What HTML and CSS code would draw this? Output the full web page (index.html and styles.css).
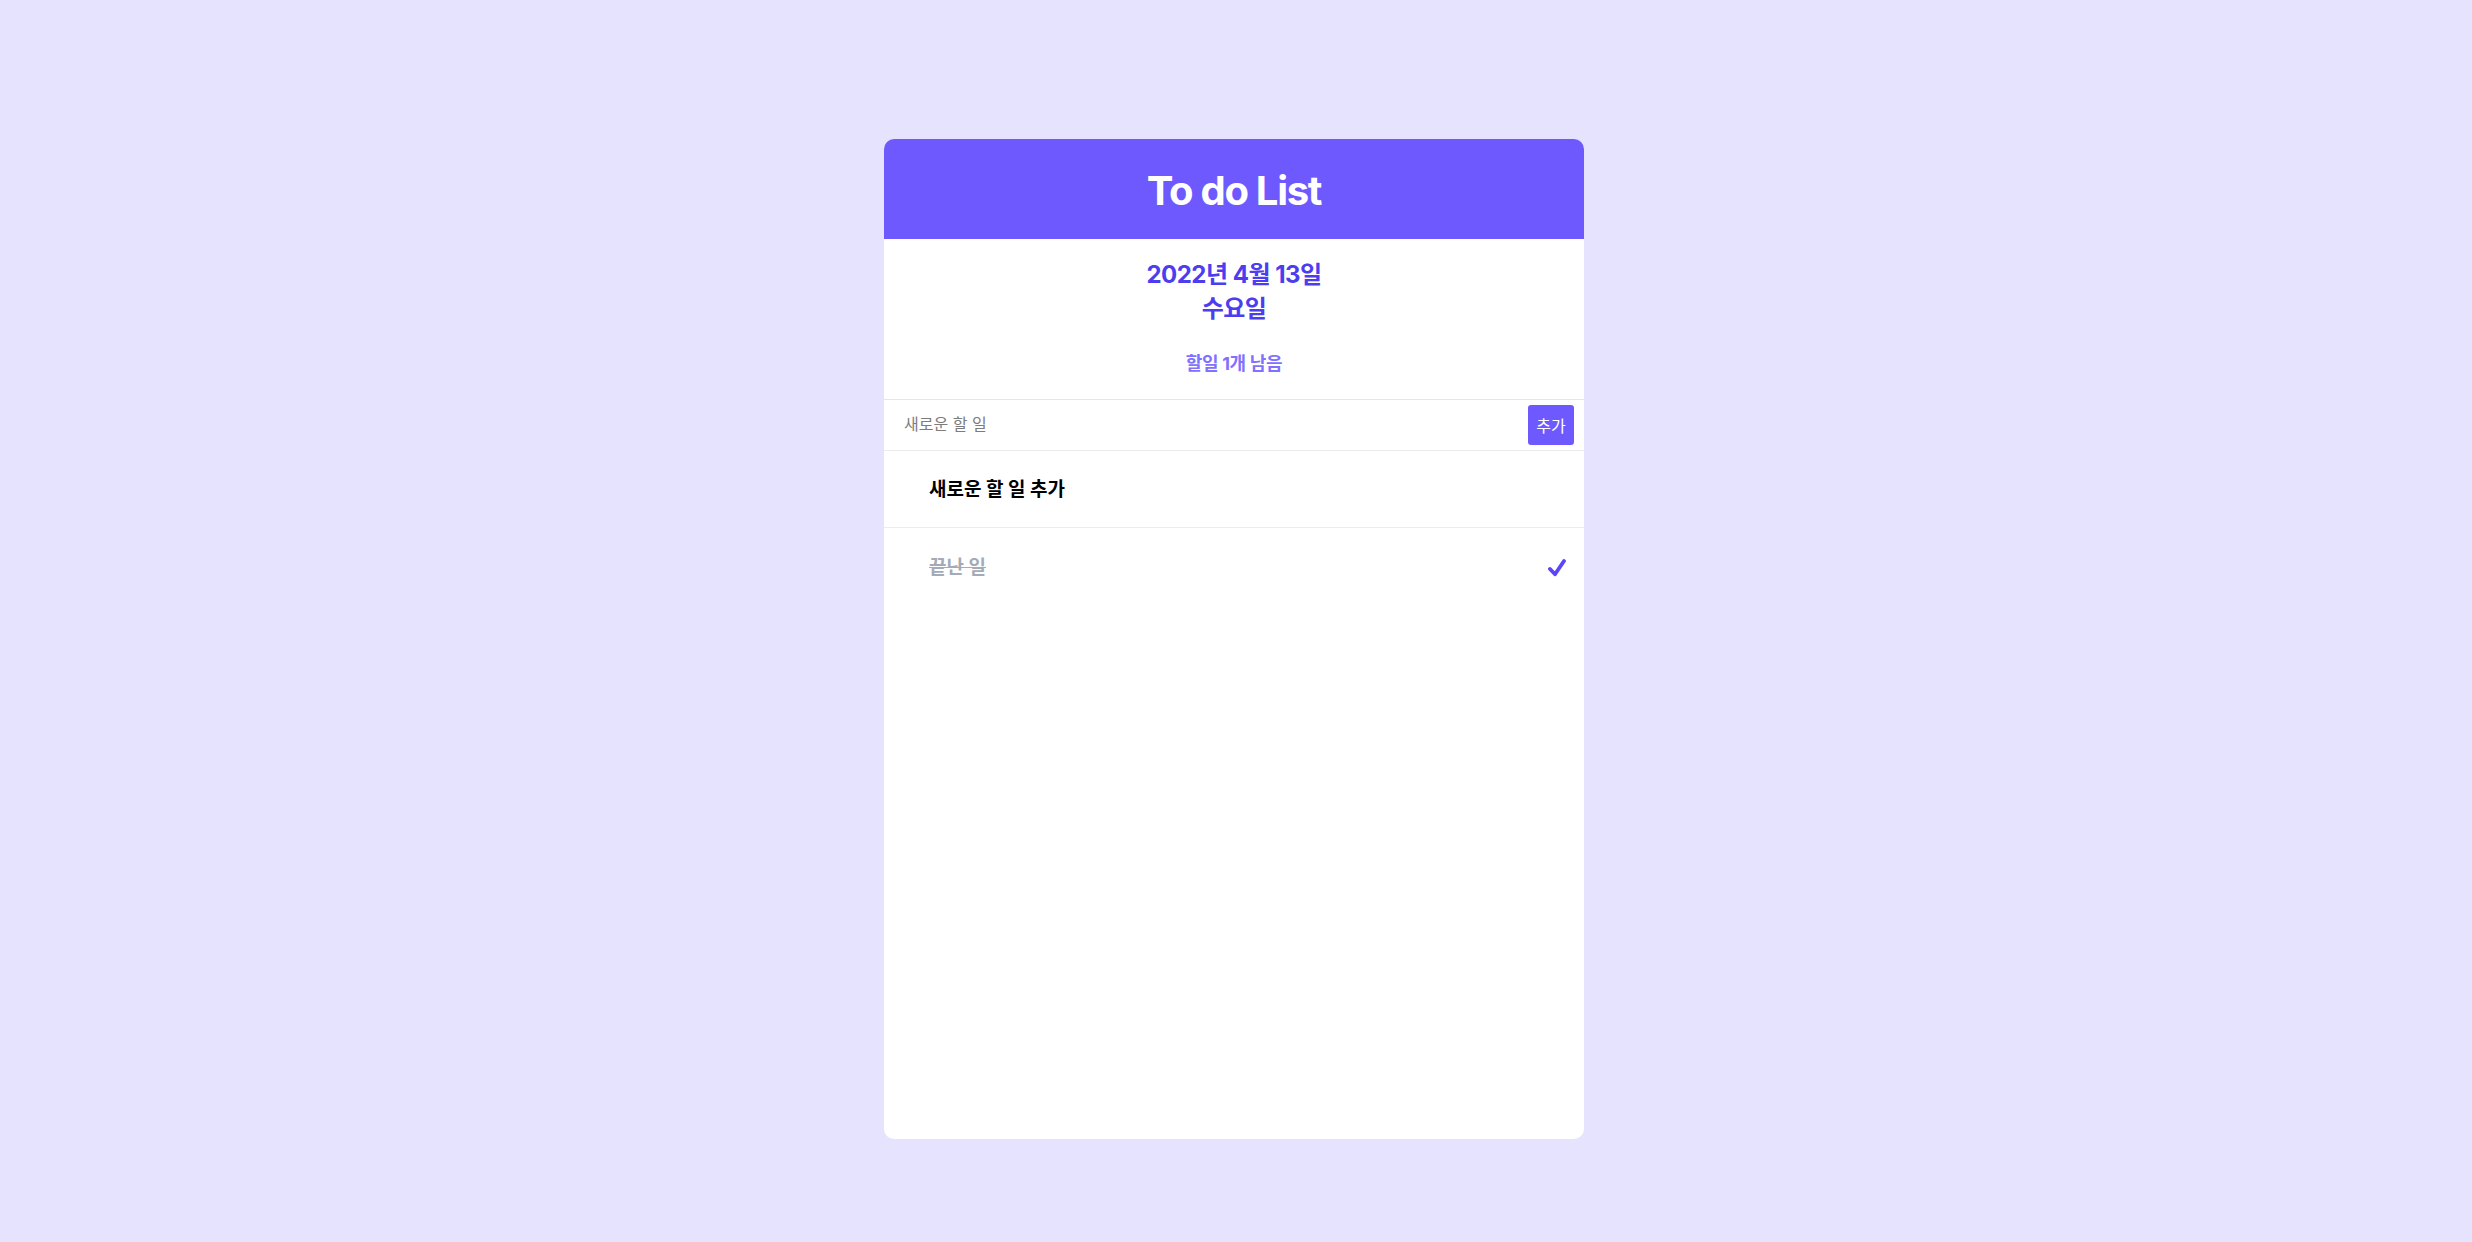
FILE: index.html
```html
<!DOCTYPE html>
<html lang="ko">
<head>
<meta charset="utf-8">
<title>To do List</title>
<link rel="stylesheet" href="styles.css">
</head>
<body>
<div class="page">
  <div class="card">
    <header class="card-header">
      <h1 class="title">To do List</h1>
    </header>
    <section class="summary">
      <h2 class="date">2022년 4월 13일<br>수요일</h2>
      <p class="count">할일 1개 남음</p>
    </section>
    <form class="add-form">
      <input class="add-input" type="text" placeholder="새로운 할 일">
      <button class="add-btn" type="button">추가</button>
    </form>
    <ul class="todo-list">
      <li class="todo-item">
        <span class="todo-text">새로운 할 일 추가</span>
      </li>
      <li class="todo-item done">
        <span class="todo-text">끝난 일</span>
        <svg class="check" width="18" height="18" viewBox="0 0 18 18" aria-hidden="true">
          <polyline points="2,10 7,15.3 16,2" fill="none" stroke="#5a45fb" stroke-width="3.8" stroke-linecap="round" stroke-linejoin="round"/>
        </svg>
      </li>
    </ul>
  </div>
</div>
</body>
</html>
```

FILE: styles.css
```css
* { box-sizing: border-box; }

html, body {
  margin: 0;
  padding: 0;
}

body {
  background: #e6e3ff;
  font-family: Inter, "Noto Sans CJK KR", sans-serif;
  min-height: 100vh;
}

.page {
  padding: 139px 4px 0 0;
  display: flex;
  justify-content: center;
}

.card {
  width: 700px;
  height: 1000px;
  background: #ffffff;
  border-radius: 10px;
  overflow: hidden;
  display: flex;
  flex-direction: column;
}

.card-header {
  height: 100px;
  background: #6e59ff;
  display: flex;
  align-items: center;
  justify-content: center;
}

.title {
  margin: 0;
  color: #ffffff;
  font-size: 40px;
  font-weight: 700;
  line-height: 1;
  letter-spacing: -1.3px;
  padding-top: 4px;
}

.summary {
  height: 161px;
  padding-top: 19px;
  border-bottom: 1px solid #e6e6ea;
  text-align: center;
}

.date {
  margin: 0;
  font-size: 24px;
  font-weight: 700;
  line-height: 1.4;
  letter-spacing: -0.5px;
  color: #4c3df0;
}

.count {
  margin: 26px 0 0;
  font-size: 18px;
  font-weight: 700;
  line-height: 1.4;
  letter-spacing: -0.3px;
  color: #8071ff;
}

.add-form {
  height: 51px;
  display: flex;
  align-items: center;
  padding: 0 10px 0 20px;
  border-bottom: 1px solid #ececef;
}

.add-input {
  flex: 1;
  border: none;
  outline: none;
  background: transparent;
  font-family: Inter, "Noto Sans CJK KR", sans-serif;
  font-size: 16px;
  color: #333;
  padding: 0 0 3px;
}

.add-input::placeholder {
  color: #7c7c7c;
}

.add-btn {
  width: 46px;
  height: 40px;
  border: none;
  border-radius: 3px;
  background: #6e59ff;
  color: #ffffff;
  font-family: Inter, "Noto Sans CJK KR", sans-serif;
  font-size: 16px;
  padding: 0;
}

.todo-list {
  list-style: none;
  margin: 0;
  padding: 0;
}

.todo-item {
  height: 77px;
  display: flex;
  align-items: center;
  justify-content: space-between;
  padding: 0 18px 3px 45px;
  border-bottom: 1px solid #ececef;
}

.todo-item:last-child {
  border-bottom: none;
}

.todo-text {
  font-size: 19px;
  font-weight: 700;
  color: #000000;
}

.done .todo-text {
  color: #a3abb8;
  text-decoration: line-through;
}

.check {
  display: block;
  margin-top: 6px;
}
```
